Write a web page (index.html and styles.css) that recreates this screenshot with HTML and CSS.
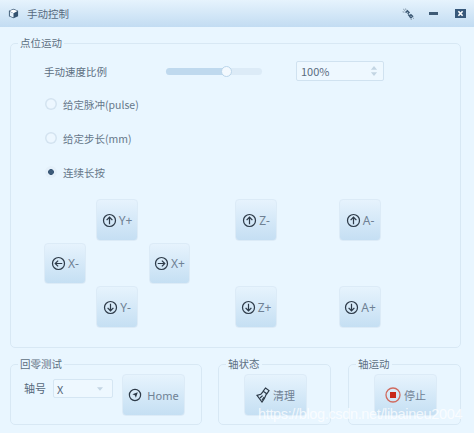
FILE: index.html
```html
<!DOCTYPE html>
<html lang="zh">
<head>
<meta charset="utf-8">
<title>手动控制</title>
<link rel="stylesheet" href="styles.css">
</head>
<body>
<div class="window">
  <header class="titlebar">
    <svg class="app-icon" viewBox="0 0 12 12"><path d="M6 .8 11 3v6l-5 2.2L1 9V3z" fill="#34526f"/><path d="M6 5.6 1.6 3.4 6 1.6l4.4 1.8z" fill="#fff"/><path d="M6 5.8v4.6L2 8.6V4z" fill="#e6f1fa"/></svg>
    <span class="title">手动控制</span>
    <svg class="win-link" viewBox="0 0 12 12"><path d="M3.6 4.6 5.4 2.8 7 4.4 5.6 5.8M6.2 6.4 7.6 8l1.3-1.2 1.6 1.5-1.5 1.5-1.6-1.6" fill="none" stroke="#3e5a75" stroke-width="1.5"/><path d="M1.2 1 3 2.6M.6 3.8 2.4 4.2M3.6.5 4 2.2M9 11l.4 1M11 10l1 .5" stroke="#7d91a3" stroke-width=".9"/></svg>
    <span class="win-min"></span>
    <span class="win-close"><svg viewBox="0 0 11 9"><path d="M3.4 2.2 7.6 6.8M7.6 2.2 3.4 6.8" stroke="#fff" stroke-width="1.6"/></svg></span>
  </header>

  <main class="content">
    <fieldset class="group motion">
      <legend>点位运动</legend>
      <div class="motion-body">
        <div class="speed-row">
          <span class="speed-label">手动速度比例</span>
          <div class="slider"><div class="slider-fill"></div><div class="slider-knob"></div></div>
          <div class="spin"><span>100%</span>
            <svg class="spin-arrows" viewBox="0 0 9 13"><path d="M4.5 1 8 5H1zM4.5 12 1 8h7z" fill="#c3d5e3"/></svg>
          </div>
        </div>
        <label class="radio"><i></i>给定脉冲(pulse)</label>
        <label class="radio"><i></i>给定步长(mm)</label>
        <label class="radio on"><i></i>连续长按</label>

        <div class="pad">
          <button class="key c2 r1"><svg viewBox="0 0 16 16"><circle cx="8" cy="8" r="6.4"/><path d="M8 12V4.6M4.9 7.6 8 4.5l3.1 3.1"/></svg>Y+</button>
          <button class="key c4 r1"><svg viewBox="0 0 16 16"><circle cx="8" cy="8" r="6.4"/><path d="M8 12V4.6M4.9 7.6 8 4.5l3.1 3.1"/></svg>Z-</button>
          <button class="key c5 r1"><svg viewBox="0 0 16 16"><circle cx="8" cy="8" r="6.4"/><path d="M8 12V4.6M4.9 7.6 8 4.5l3.1 3.1"/></svg>A-</button>
          <button class="key c1 r2"><svg viewBox="0 0 16 16"><circle cx="8" cy="8" r="6.4"/><path d="M12 8H4.6M7.6 4.9 4.5 8l3.1 3.1"/></svg>X-</button>
          <button class="key c3 r2"><svg viewBox="0 0 16 16"><circle cx="8" cy="8" r="6.4"/><path d="M4 8h7.4M8.4 4.9 11.5 8l-3.1 3.1"/></svg>X+</button>
          <button class="key c2 r3"><svg viewBox="0 0 16 16"><circle cx="8" cy="8" r="6.4"/><path d="M8 4v7.4M4.9 8.4 8 11.5l3.1-3.1"/></svg>Y-</button>
          <button class="key c4 r3"><svg viewBox="0 0 16 16"><circle cx="8" cy="8" r="6.4"/><path d="M8 4v7.4M4.9 8.4 8 11.5l3.1-3.1"/></svg>Z+</button>
          <button class="key c5 r3"><svg viewBox="0 0 16 16"><circle cx="8" cy="8" r="6.4"/><path d="M8 4v7.4M4.9 8.4 8 11.5l3.1-3.1"/></svg>A+</button>
        </div>
      </div>
    </fieldset>

    <div class="bottom">
      <fieldset class="group home">
        <legend>回零测试</legend>
        <div class="home-body">
          <span class="axis-label">轴号</span>
          <div class="combo"><span>X</span><svg viewBox="0 0 9 5"><path d="M0 0h9L4.5 5z" fill="#c3d5e3"/></svg></div>
          <button class="wide"><svg class="icon" viewBox="0 0 16 16"><circle cx="8" cy="8" r="6.4"/><path class="solid" d="M11.2 4.8 9 11 7.8 8.2 5 7z"/></svg>Home</button>
        </div>
      </fieldset>
      <fieldset class="group status">
        <legend>轴状态</legend>
        <div class="btn-body">
          <button class="wide cjk"><svg class="broom" viewBox="0 0 14 16"><path d="M9.5 1 13 3.6 10.8 6.8 7.2 4.2z"/><path d="M7.4 4.4 4.8 7.2 1 8.4 6 15 8.4 11.4 10.6 6.6"/><path d="M4 11 6.6 8.6M6 13 8.2 10.2"/></svg>清理</button>
        </div>
      </fieldset>
      <fieldset class="group axis">
        <legend>轴运动</legend>
        <div class="btn-body">
          <button class="wide cjk stop-btn"><svg class="stop" viewBox="0 0 16 16"><circle cx="8" cy="8" r="7"/><rect x="5" y="5" width="6" height="6"/></svg>停止</button>
        </div>
      </fieldset>
    </div>
  </main>
  <div class="watermark">https://blog.csdn.net/libaineu2004</div>
</div>
</body>
</html>
```
FILE: styles.css
```css
* { box-sizing: border-box; }
html, body { margin: 0; padding: 0; }
body { width: 474px; height: 433px; overflow: hidden; background: #eaf6fe; }
.window {
  position: relative; width: 474px; height: 433px; overflow: hidden;
  background: #e9f6ff; color: #5d6f82;
  font: 10.5px "Noto Sans CJK SC", "Noto Sans", sans-serif;
}
.titlebar {
  display: flex; align-items: center; height: 27px; padding: 0 0 0 8px;
  background: linear-gradient(#e6f3fd, #c2dcf2);
}
.app-icon { width: 11px; height: 11px; }
.title { margin-left: 8px; font-size: 10.5px; color: #566a7e; }
.win-link { width: 12px; height: 12px; margin-left: auto; margin-right: 15px; }
.win-min { width: 9px; height: 2.5px; background: #3e5a75; margin-right: 17px; }
.win-close { width: 11px; height: 9px; margin-right: 8px; background: #37587a; display: flex; }
.win-close svg { width: 11px; height: 9px; }

.content { padding: 10px 13px 0 10px; }
.group {
  margin: 0; padding: 0; min-width: 0;
  border: 1px solid #d8e8f4; border-radius: 5px;
}
.group legend { margin-left: 7px; padding: 0 2px; font-size: 10.5px; line-height: 12px; color: #5d6f82; }
.motion { height: 311px; }
.motion-body { padding: 12px 0 0 33px; }

.speed-row { display: flex; align-items: center; height: 20px; }
.speed-label { width: 122px; }
.slider { position: relative; width: 96px; height: 7px; border-radius: 4px; background: #dcebf7; }
.slider-fill { width: 60px; height: 7px; border-radius: 4px; background: #bfd9ee; }
.slider-knob {
  position: absolute; left: 55px; top: -2px; width: 11px; height: 11px; border-radius: 50%;
  background: #f3f9fe; border: 1.5px solid #bad5ea;
}
.spin {
  display: flex; align-items: center; justify-content: space-between;
  width: 88px; height: 20px; margin-left: 34px; padding: 0 5px 0 4px;
  border: 1px solid #d0e2f0; border-radius: 2px; background: #eef8ff;
  font-size: 11px; color: #5a6b7e;
}
.spin-arrows { width: 8px; height: 12px; }

.radio { display: flex; align-items: center; height: 14px; margin-left: 1px; color: #66788a; }
.speed-row + .radio { margin-top: 16px; }
.radio + .radio { margin-top: 20px; }
.radio i {
  display: flex; width: 12px; height: 12px; margin-right: 6px; border-radius: 50%;
  background: #edf7ff; box-shadow: inset 0 0 0 1.5px #d3e3f0;
}
.radio.on i { background: radial-gradient(circle, #3d5b79 0 2.6px, #e4f0fa 3.2px); box-shadow: none; }

.pad {
  display: grid; margin-top: 20px;
  grid-template-columns: 42px 10px 42px 11px 41px 45px 42px 62px 42px;
  grid-template-rows: 42px 2px 41px 2px 42px;
}
.key, .wide {
  display: flex; align-items: center; justify-content: center; gap: 2px;
  padding: 0; border: 1px solid #dcebf7; border-radius: 4px;
  background: linear-gradient(#e6f3fd, #c5dff3);
  font: 12px "Noto Sans", sans-serif; color: #6f8194;
}
.key svg { width: 15px; height: 15px; fill: none; stroke: #2d3a48; stroke-width: 1.3; flex: none; }
.c1 { grid-column: 1; } .c2 { grid-column: 3; } .c3 { grid-column: 5; }
.c4 { grid-column: 7; } .c5 { grid-column: 9; }
.r1 { grid-row: 1; } .r2 { grid-row: 3; } .r3 { grid-row: 5; }

.bottom { display: flex; margin-top: 10px; height: 67px; }
.bottom .group { height: 67px; }
.home { width: 192px; }
.status { width: 113px; margin-left: 16px; }
.axis { width: 113px; margin-left: 17px; }
.home-body { display: flex; align-items: flex-start; padding: 4px 0 0 13px; }
.btn-body { padding: 4px 0 0 25px; }
.axis-label { width: 29px; margin-top: 6px; font-size: 11px; line-height: 16px; color: #55687b; }
.combo {
  display: flex; align-items: center; justify-content: space-between;
  width: 60px; height: 19px; margin-top: 5px; padding: 0 9px 0 3px;
  border: 1px solid #d5e6f3; border-radius: 2px; background: #eef8ff; color: #55677a; font-size: 11px;
}
.combo svg { width: 6px; height: 4px; }
.wide { width: 63px; height: 42px; gap: 5px; font-size: 11px; }
.home .wide { margin-left: 9px; }
.icon { width: 14px; height: 14px; fill: none; stroke: #2d3a48; stroke-width: 1.4; flex: none; }
.icon .solid { fill: #2d3a48; stroke: none; }
.broom { width: 14px; height: 16px; flex: none; fill: none; stroke: #2d3a48; stroke-width: 1.2; }
.stop { width: 16px; height: 16px; flex: none; fill: none; stroke: #d06a5e; stroke-width: 1.3; }
.stop rect { fill: #c8281a; stroke: none; }
.wide.cjk { font-family: "Noto Sans CJK SC", sans-serif; font-size: 11px; gap: 3px; }

.watermark {
  position: absolute; left: 258px; top: 406px; white-space: nowrap;
  font: 14.5px "Liberation Sans", sans-serif; color: rgba(255,255,255,.75);
  letter-spacing: -.35px;
}
```
